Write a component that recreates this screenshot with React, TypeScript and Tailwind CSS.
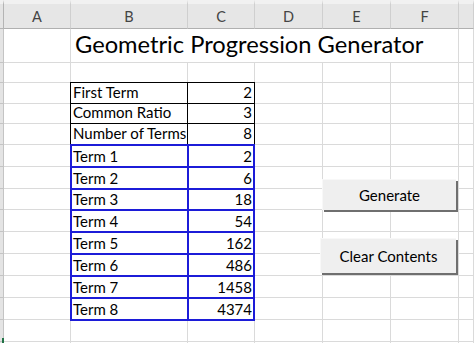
import React from "react";

const font = { fontFamily: "Lato, 'Noto Sans', Arial, sans-serif" };

const colLetters = ["", "A", "B", "C", "D", "E", "F", ""];
const NUM_ROWS = 16; // including header
const GRID =
  "grid grid-cols-[4px_67px_117px_67px_68px_68px_68px_15px] grid-rows-[29px_34px_20px_21px_20px_21px_22px_22px_21px_22px_22px_22px_22px_22px_22px_22px]";

const infoRows: [string, string][] = [
  ["First Term", "2"],
  ["Common Ratio", "3"],
  ["Number of Terms", "8"],
];
const termRows: [string, string][] = [
  ["Term 1", "2"],
  ["Term 2", "6"],
  ["Term 3", "18"],
  ["Term 4", "54"],
  ["Term 5", "162"],
  ["Term 6", "486"],
  ["Term 7", "1458"],
  ["Term 8", "4374"],
];
const infoHeights = ["h-[21px]", "h-[20px]", "h-[21px]"];
const termHeights = [
  "h-[22px]",
  "h-[22px]",
  "h-[21px]",
  "h-[22px]",
  "h-[22px]",
  "h-[22px]",
  "h-[22px]",
  "h-[24px]",
];

function Cells() {
  const cells: React.ReactNode[] = [];
  colLetters.forEach((l, i) => {
    cells.push(
      <div
        key={`h${i}`}
        className={
          i === 0
            ? "bg-[#e4e4e4] border-t-4 border-t-[#f1f1f1] border-r border-b border-r-[#b4b4b4] border-b-[#b4b4b4]"
            : "bg-[#e6e6e6] border-t-4 border-t-[#f1f1f1] border-r border-r-[#cfcfcf] border-b border-b-[#b0b0b0] flex items-end justify-center pb-[4px] text-[14.5px] leading-none text-[#444]"
        }
      >
        {l}
      </div>
    );
  });
  for (let r = 1; r < NUM_ROWS; r++) {
    for (let c = 0; c < 8; c++) {
      if (r === 1 && c >= 2 && c <= 6) {
        if (c === 2) {
          cells.push(
            <div
              key="title"
              className="col-span-5 border-r border-b border-[#dadada] bg-white flex items-end pl-[4px] pb-[5px] text-[23.7px] leading-none text-black whitespace-nowrap"
            >
              Geometric Progression Generator
            </div>
          );
        }
        continue;
      }
      cells.push(
        <div
          key={`${r}-${c}`}
          className={
            c === 0
              ? "bg-[#e4e4e4] border-r border-b border-[#c4c4c4]"
              : "bg-white border-r border-b border-[#dadada]"
          }
        />
      );
    }
  }
  return <>{cells}</>;
}

function Table() {
  return (
    <div className="col-start-3 col-end-5 row-start-4 row-end-16 -ml-px -mt-px self-start flex flex-col text-[15px] leading-none text-black bg-white">
      {infoRows.map(([label, val], i) => (
        <div key={label} className={`flex ${infoHeights[i]}`}>
          <div className="w-[117px] border-l border-t border-black flex items-end pl-[2px] pb-[3px] whitespace-nowrap">
            {label}
          </div>
          <div className="flex-1 border-l border-t border-r border-black flex items-end justify-end pr-[2px] pb-[3px]">
            {val}
          </div>
        </div>
      ))}
      {termRows.map(([label, val], i) => (
        <div key={label} className={`flex ${termHeights[i]}`}>
          <div
            className={`w-[117px] border-l-2 border-t-2 border-[#1c1cd8] flex items-end pl-[1px] pb-[2px] ${
              i === termRows.length - 1 ? "border-b-2" : ""
            }`}
          >
            {label}
          </div>
          <div
            className={`flex-1 border-l-2 border-t-2 border-r-2 border-[#1c1cd8] flex items-end justify-end pr-[1px] pb-[2px] ${
              i === termRows.length - 1 ? "border-b-2" : ""
            }`}
          >
            {val}
          </div>
        </div>
      ))}
    </div>
  );
}

export default function App() {
  return (
    <div className="relative w-[474px] h-[343px] overflow-hidden bg-white" style={font}>
      <div className="grid">
        <div className={`col-start-1 row-start-1 ${GRID}`}>
          <Cells />
        </div>
        <div className={`col-start-1 row-start-1 ${GRID}`}>
          <Table />
        </div>
      </div>
      <button className="absolute left-[322px] top-[179px] w-[134px] h-[31px] bg-[#efefef] border-t border-l border-[#f8f8f8] shadow-[2px_2px_0_#6f6f6f] text-[15px] leading-none text-black">
        Generate
      </button>
      <button className="absolute left-[320px] top-[238px] w-[136px] h-[35px] bg-[#efefef] border-t border-l border-[#f8f8f8] shadow-[2px_2px_0_#6f6f6f] text-[15px] leading-none text-black">
        Clear Contents
      </button>
      <div className="absolute left-[2px] top-[338px] w-[2px] h-[5px] bg-[#217346]" />
    </div>
  );
}
